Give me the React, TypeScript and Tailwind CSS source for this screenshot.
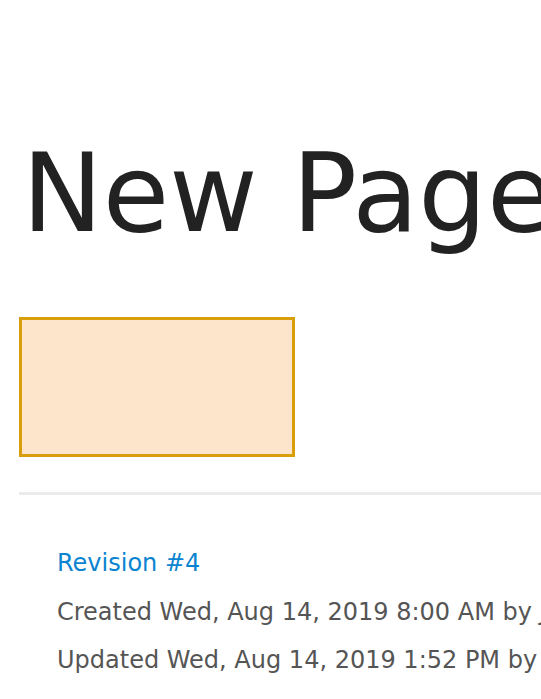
export default function App() {
  return (
    <div
      className="w-screen min-h-screen overflow-hidden bg-white pl-[19px] pt-[140px]"
      style={{ fontFamily: '"DejaVu Sans", sans-serif' }}
    >
      <h1 className="ml-[3px] whitespace-nowrap text-[108px] leading-[108px] text-[#222222]">New Page Title</h1>

      <div className="mt-[69px] h-[140px] w-[276px] border-[3px] border-[#d99e0b] bg-[#fde5cc]" />

      <div className="mt-[35px] h-[3px] w-[2000px] bg-[#ebebeb]" />

      <div className="mt-[44px] pl-[38px] whitespace-nowrap text-[24px] leading-[48.5px]">
        <a href="#" className="block text-[#0a84d1]">
          Revision #4
        </a>
        <p className="text-[#555555]">Created Wed, Aug 14, 2019 8:00 AM by Jane Doe</p>
        <p className="text-[#555555]">Updated Wed, Aug 14, 2019 1:52 PM by Jane Doe</p>
      </div>
    </div>
  );
}
